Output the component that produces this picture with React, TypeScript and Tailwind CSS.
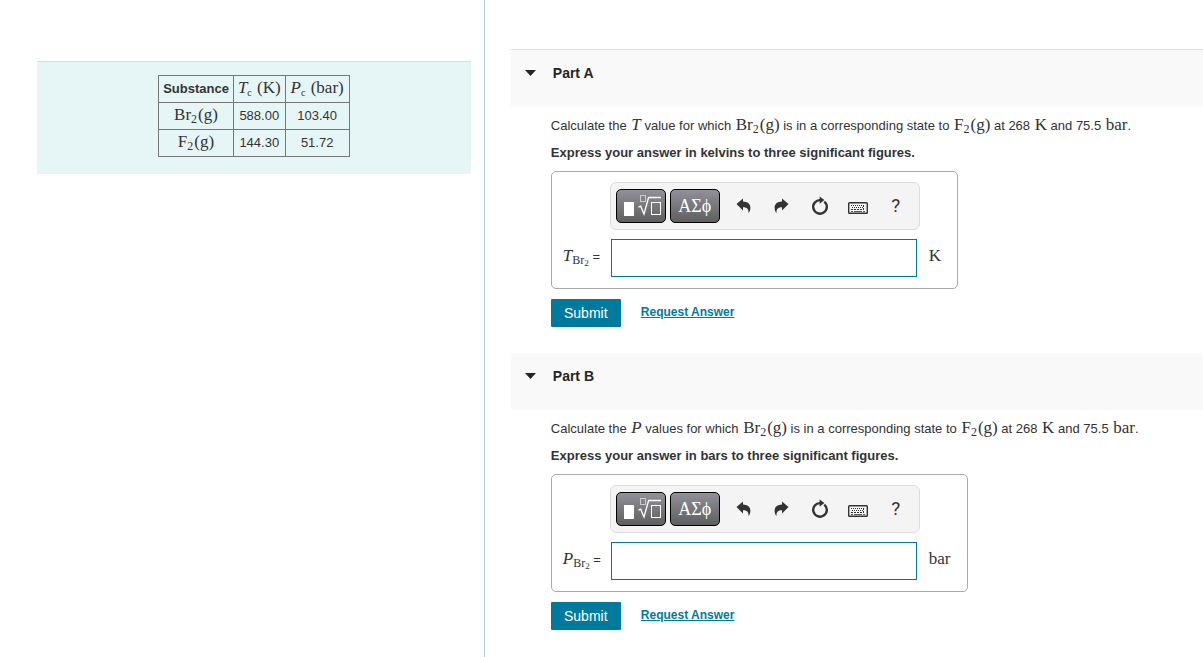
import React, { useState } from "react";

interface PartProps {
  id: string;
  title: string;
  symbol: string;
  noun: string;
  unitName: string;
  unit: string;
  divider?: boolean;
}

const substances = [
  { name: "Br", tc: "588.00", pc: "103.40" },
  { name: "F", tc: "144.30", pc: "51.72" },
];

function MathText({ children }: { children: React.ReactNode }) {
  return (
    <span className="font-['Liberation_Serif',serif] text-[17px] leading-none font-normal">
      {children}
    </span>
  );
}

function Gas({ name }: { name: string }) {
  return (
    <MathText>
      {name}
      <sub className="text-[12px] mr-px">2</sub>(g)
    </MathText>
  );
}

function ArrowIcon({ flip = false }: { flip?: boolean }) {
  return (
    <svg
      viewBox="0 0 15 16"
      className={flip ? "w-[15px] h-4 -scale-x-100" : "w-[15px] h-4"}
      fill="#333"
      aria-hidden="true"
    >
      <path d="M0.5 6 7 0.4v3.2c4.8 0.2 7.4 2.6 7.4 6.2 0 2-0.7 3.9-1.9 5.5 0.3-4-1.2-6-5.5-6v3.2z" />
    </svg>
  );
}

function ResetIcon() {
  return (
    <svg viewBox="0 0 18 20" className="w-[18px] h-5" aria-hidden="true">
      <path
        d="M13.3 5.6A6.8 6.8 0 1 1 9.5 4.1"
        fill="none"
        stroke="#333"
        strokeWidth="2.4"
      />
      <path d="M8.6 0.4 13.4 4 8.6 7.8z" fill="#333" />
    </svg>
  );
}

function KeyboardIcon() {
  return (
    <svg
      viewBox="0 0 20 12"
      className="w-5 h-3 mt-1"
      fill="none"
      stroke="#333"
      aria-hidden="true"
    >
      <rect x="0.7" y="0.7" width="18.6" height="10.6" rx="0.8" strokeWidth="1.4" />
      <path d="M3 3.5h14M4 5.5h11" strokeDasharray="1 1" />
      <path d="M3 7.5h11M15.5 3v5" strokeDasharray="2 1" />
      <path d="M3 9.5h2M6 9.5h8M15 9.5h2" strokeWidth="0.8" />
    </svg>
  );
}

function TemplateIcon() {
  return (
    <svg
      viewBox="0 0 40 22"
      className="w-10 h-[22px]"
      fill="none"
      stroke="#fff"
      aria-hidden="true"
    >
      <rect x="3" y="7" width="10" height="14" fill="#fff" stroke="none" />
      <rect x="19.5" y="0.5" width="5" height="6" stroke="#ccc" />
      <path d="M17.5 12.2l2.2-1L23 19l4.6-16.5H40" strokeWidth="1.3" />
      <rect x="30.5" y="7.5" width="9" height="12" />
    </svg>
  );
}

function Toolbar() {
  const dark =
    "w-[50px] h-[34px] flex items-center justify-center rounded-[5px] border border-black bg-linear-to-b from-[#92909a] to-[#5f5f5f] text-white";
  const plain = "w-[38px] h-[34px] flex items-center justify-center";
  return (
    <div className="w-[310px] h-12 flex items-center pl-[5px] bg-[#f4f4f4] border border-[#ddd] rounded-md">
      <button aria-label="Templates" className={dark}>
        <TemplateIcon />
      </button>
      <button
        aria-label="Symbols"
        className={`${dark} ml-1 font-['Liberation_Serif',serif] text-[18px]`}
      >
        ΑΣϕ
      </button>
      <button aria-label="Undo" className={`${plain} ml-[5px]`}>
        <ArrowIcon />
      </button>
      <button aria-label="Redo" className={plain}>
        <ArrowIcon flip />
      </button>
      <button aria-label="Reset" className={plain}>
        <ResetIcon />
      </button>
      <button aria-label="Keyboard shortcuts" className={plain}>
        <KeyboardIcon />
      </button>
      <button aria-label="Help" className={`${plain} font-[Roboto,sans-serif] text-[19px]`}>
        ?
      </button>
    </div>
  );
}

function Part({ id, title, symbol, noun, unitName, unit, divider }: PartProps) {
  const [answer, setAnswer] = useState("");
  const [open, setOpen] = useState(true);

  return (
    <section className="mb-[26px]">
      <h2
        className={
          divider
            ? "h-[58px] bg-[#f9f9f9] border-t border-[#ddd]"
            : "h-[57px] bg-[#f9f9f9]"
        }
      >
        <button
          onClick={() => setOpen(!open)}
          aria-expanded={open}
          className="flex items-center h-[46px] pl-[14px] gap-[17px] text-sm font-bold text-[#252525]"
        >
          <svg viewBox="0 0 11 6" className="w-[11px] h-1.5" fill="#252525" aria-hidden="true">
            <path d="M0 0h11L5.5 6z" />
          </svg>
          {title}
        </button>
      </h2>

      {open && (
        <div className="pl-10 pt-[5px]">
          <p className="leading-[27px] [&>span]:ml-px">
            Calculate the{" "}
            <MathText>
              <i>{symbol}</i>
            </MathText>{" "}
            {noun} for which <Gas name="Br" /> is in a corresponding state to{" "}
            <Gas name="F" /> at 268 <MathText>K</MathText> and 75.5{" "}
            <MathText>bar</MathText>.
          </p>
          <p className="leading-[27px] font-bold">
            Express your answer in {unitName} to three significant figures.
          </p>

          <div className="mt-[5px] w-fit border border-[#aaa] rounded-[5px] pt-2.5 pb-[11px] pl-[11px] pr-4">
            <div className="pl-[47px]">
              <Toolbar />
            </div>
            <div className="mt-[9px] flex items-center">
              <label htmlFor={id} className="w-12 pb-[3px] whitespace-nowrap">
                <MathText>
                  <i>{symbol}</i>
                  <sub className="text-[12px]">
                    Br<sub className="text-[9px]">2</sub>
                  </sub>
                </MathText>{" "}
                =
              </label>
              <input
                id={id}
                type="text"
                value={answer}
                onChange={(e) => setAnswer(e.target.value)}
                className="w-[306px] h-[38px] px-2 bg-white border border-[#007a9c] mr-3"
              />
              <div className="pb-[3px]">
                <MathText>{unit}</MathText>
              </div>
            </div>
          </div>

          <div className="mt-2.5 flex items-center gap-5">
            <button className="w-[70px] h-7 bg-[#007a9c] text-white text-sm rounded-[1px]">
              Submit
            </button>
            <a href="#" className="mb-[3px] text-[12px] font-bold text-[#007a9c] underline">
              Request Answer
            </a>
          </div>
        </div>
      )}
    </section>
  );
}

export default function App() {
  const cell = "border border-[#777] px-1 h-[27px]";
  return (
    <div className="flex min-h-screen bg-white font-['Liberation_Sans',Arial,sans-serif] text-[13px] text-[#333]">
      <aside className="w-[40.3%] shrink-0 border-r border-[#b5cbdc] pt-[61px] pl-[37px] pr-[13px]">
        <div className="bg-[#e6f6f6] border-t border-[#ddd] pt-[13px] pb-[17px]">
          <table className="mx-auto border-collapse text-center">
            <thead>
              <tr>
                <th className={cell}>Substance</th>
                <th className={cell}>
                  <MathText>
                    <i>T</i>
                    <sub className="text-[10px] mr-px">c</sub> (K)
                  </MathText>
                </th>
                <th className={`${cell} w-16`}>
                  <MathText>
                    <i>P</i>
                    <sub className="text-[10px] mr-px">c</sub> (bar)
                  </MathText>
                </th>
              </tr>
            </thead>
            <tbody>
              {substances.map((s) => (
                <tr key={s.name}>
                  <td className={cell}>
                    <Gas name={s.name} />
                  </td>
                  <td className={cell}>{s.tc}</td>
                  <td className={cell}>{s.pc}</td>
                </tr>
              ))}
            </tbody>
          </table>
        </div>
      </aside>

      <main className="flex-1 min-w-0 pt-[49px] pl-[26px]">
        <Part
          id="answer-a"
          title="Part A"
          symbol="T"
          noun="value"
          unitName="kelvins"
          unit="K"
          divider
        />
        <Part
          id="answer-b"
          title="Part B"
          symbol="P"
          noun="values"
          unitName="bars"
          unit="bar"
        />
      </main>
    </div>
  );
}
